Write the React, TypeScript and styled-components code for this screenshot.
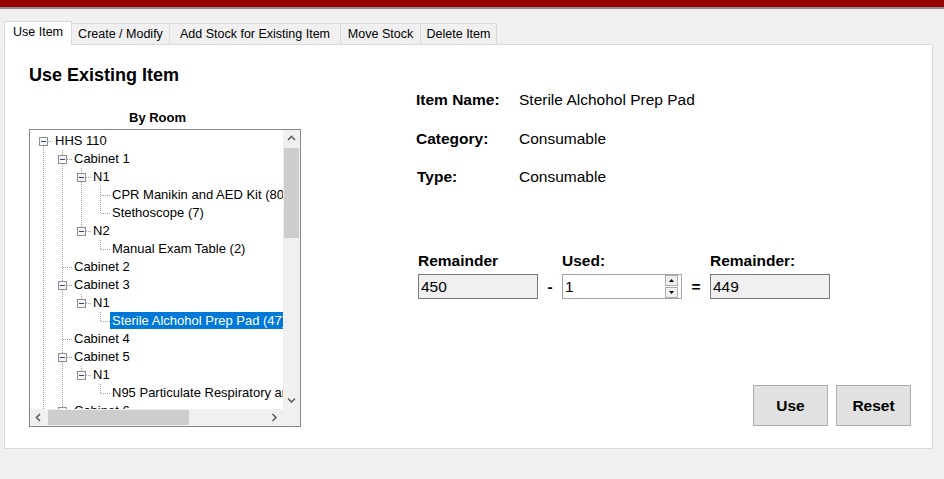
import React from "react"
import styled, { createGlobalStyle } from "styled-components"

const GlobalStyle = createGlobalStyle`
    body {
        margin: 0;
        background: #f0f0f0;
        font-family: "Liberation Sans", Arial, sans-serif;
        color: #000;
    }
`

type TreeNode = {
    label: string
    children?: TreeNode[]
    selected?: boolean
}

type FlatRow = {
    label: string
    level: number
    guides: boolean[]
    hasPrev: boolean
    hasNext: boolean
    expandable: boolean
    selected: boolean
}

const tree: TreeNode[] = [
    {
        label: "HHS 110",
        children: [
            {
                label: "Cabinet 1",
                children: [
                    { label: "N1", children: [{ label: "CPR Manikin and AED Kit (80)" }, { label: "Stethoscope (7)" }] },
                    { label: "N2", children: [{ label: "Manual Exam Table (2)" }] },
                ],
            },
            { label: "Cabinet 2" },
            {
                label: "Cabinet 3",
                children: [{ label: "N1", children: [{ label: "Sterile Alchohol Prep Pad (47)", selected: true }] }],
            },
            { label: "Cabinet 4" },
            {
                label: "Cabinet 5",
                children: [{ label: "N1", children: [{ label: "N95 Particulate Respiratory and Surgical Mask (20)" }] }],
            },
            { label: "Cabinet 6", children: [{ label: "N1" }] },
        ],
    },
    { label: "HHS 111", children: [{ label: "Cabinet 1" }] },
]

const flatten = (nodes: TreeNode[], level: number, guides: boolean[]): FlatRow[] =>
    nodes.flatMap((node, i) => {
        const hasNext = i < nodes.length - 1
        const row: FlatRow = {
            label: node.label,
            level,
            guides,
            hasPrev: i > 0 || level > 0,
            hasNext,
            expandable: !!node.children,
            selected: !!node.selected,
        }
        return [row, ...(node.children ? flatten(node.children, level + 1, [...guides, hasNext]) : [])]
    })

const rows = flatten(tree, 0, [])

// tab widths as the form lays them out
const tabs = [
    { label: "Use Item", width: 68 },
    { label: "Create / Modify", width: 99 },
    { label: "Add Stock for Existing Item", width: 172 },
    { label: "Move Stock", width: 81 },
    { label: "Delete Item", width: 77 },
]

const TopBar = styled.div`
    height: 7px;
    background: #990000;
    border-bottom: 2px solid #8c8c8c;
`

const TabStrip = styled.div`
    display: flex;
    align-items: flex-end;
    height: 23px;
    margin-top: 12px;
    padding-left: 4px;
`

const Tab = styled.div<{ $active?: boolean; $width: number }>`
    position: relative;
    z-index: 1;
    box-sizing: border-box;
    width: ${(p) => p.$width}px;
    height: ${(p) => (p.$active ? "24px" : "21px")};
    margin-bottom: ${(p) => (p.$active ? "-1px" : "0")};
    margin-left: -1px;
    background: ${(p) => (p.$active ? "#fff" : "#f0f0f0")};
    border: 1px solid #d9d9d9;
    border-bottom: none;
    font-size: 12.5px;
    line-height: 20px;
    text-align: center;
    white-space: nowrap;

    &:first-child {
        margin-left: 0;
    }
`

const Panel = styled.div`
    box-sizing: border-box;
    display: flex;
    width: 929px;
    height: 405px;
    margin-left: 4px;
    padding: 19px 21px 22px 24px;
    background: #fff;
    border: 1px solid #dadada;
`

const LeftColumn = styled.div`
    display: flex;
    flex-direction: column;
    width: 272px;
    flex: none;
`

const Title = styled.div`
    font-size: 18px;
    font-weight: bold;
    line-height: 22px;
`

const RoomLabel = styled.div`
    margin: 24px 0 0 100px;
    font-size: 13px;
    font-weight: bold;
    line-height: 15px;
`

const TreeBox = styled.div`
    box-sizing: border-box;
    display: grid;
    grid-template-columns: 1fr 17px;
    grid-template-rows: 1fr 17px;
    width: 272px;
    height: 298px;
    margin-top: 4px;
    border: 1px solid #828790;
    background: #fff;
`

const TreeList = styled.div`
    overflow: hidden;
    padding: 2px 0 0 4px;
`

const TreeRow = styled.div`
    display: flex;
    height: 18px;
    white-space: nowrap;
`

const NodeLabel = styled.span<{ $selected?: boolean }>`
    height: 17px;
    padding: 0 2px;
    font-size: 13px;
    line-height: 17px;
    background: ${(p) => (p.$selected ? "#0078d7" : "transparent")};
    color: ${(p) => (p.$selected ? "#fff" : "#000")};
`

const CellSvg = styled.svg`
    display: block;
    flex: none;
`

const VScroll = styled.div`
    display: flex;
    flex-direction: column;
    background: #f0f0f0;
`

const HScroll = styled.div`
    display: flex;
    align-items: center;
    background: #f0f0f0;
`

const Corner = styled.div`
    background: #f0f0f0;
`

const ArrowButton = styled.div`
    display: flex;
    align-items: center;
    justify-content: center;
    width: 17px;
    height: 17px;
    flex: none;
`

const Track = styled.div<{ $vertical?: boolean }>`
    flex: 1;
    display: flex;
    flex-direction: ${(p) => (p.$vertical ? "column" : "row")};
    align-items: center;
`

const Thumb = styled.div<{ $vertical?: boolean; $size: number }>`
    background: #cdcdcd;
    ${(p) =>
        p.$vertical
            ? `width: 15px; height: ${p.$size}px; margin-top: 1px;`
            : `height: 15px; width: ${p.$size}px; margin-left: 1px;`}
`

const RightColumn = styled.div`
    flex: 1;
    display: flex;
    flex-direction: column;
    margin-left: 115px;
`

const InfoGrid = styled.div`
    display: grid;
    grid-template-columns: 103px auto;
    grid-auto-rows: 18px;
    row-gap: 20.5px;
    margin-top: 27px;
    font-size: 15.5px;
    line-height: 18px;
`

const InfoLabel = styled.div<{ $inset?: boolean }>`
    font-weight: bold;
    padding-left: ${(p) => (p.$inset ? "1px" : "0")};
`

const CalcRow = styled.div`
    display: flex;
    align-items: flex-end;
    margin: 66px 0 0 2px;
`

const Field = styled.div`
    display: flex;
    flex-direction: column;
    gap: 4px;
`

const FieldLabel = styled.div`
    font-size: 15.5px;
    font-weight: bold;
    line-height: 18px;
`

const ValueBox = styled.div<{ $editable?: boolean }>`
    box-sizing: border-box;
    display: flex;
    align-items: center;
    width: 120px;
    height: 25px;
    padding: 1px 2px 1px 2px;
    background: ${(p) => (p.$editable ? "#fff" : "#f0f0f0")};
    border: 1px solid ${(p) => (p.$editable ? "#a5a5a5" : "#7a7a7a")};
    font-size: 15.5px;
`

const ValueText = styled.span`
    flex: 1;
`

const Spinner = styled.div`
    display: flex;
    flex-direction: column;
    gap: 1px;
    margin-right: 1px;
`

const SpinButton = styled.div`
    display: flex;
    align-items: center;
    justify-content: center;
    box-sizing: border-box;
    width: 13px;
    height: 11px;
    background: #f0f0f0;
    border: 1px solid #adadad;
`

const Operator = styled.div`
    width: 24px;
    height: 25px;
    line-height: 25px;
    text-align: center;
    font-size: 15.5px;
    font-weight: bold;
`

const WideOperator = styled(Operator)`
    width: 28px;
`

const ButtonRow = styled.div`
    display: flex;
    justify-content: flex-end;
    gap: 8px;
    margin-top: auto;
`

const Button = styled.button`
    box-sizing: border-box;
    width: 75px;
    height: 41px;
    padding: 0;
    background: #e1e1e1;
    border: 1px solid #adadad;
    font-family: "Liberation Sans", Arial, sans-serif;
    font-size: 15.5px;
    font-weight: bold;
    color: #000;
`

const DOT = { stroke: "#a0a0a0", strokeDasharray: "1 1", strokeWidth: 1 }

const GuideCell: React.FC<{ line: boolean }> = ({ line }) => (
    <CellSvg width={19} height={18}>
        {line && <line x1={9.5} y1={0} x2={9.5} y2={18} {...DOT} />}
    </CellSvg>
)

const ConnectorCell: React.FC<{ top: boolean; bottom: boolean; box: boolean }> = ({ top, bottom, box }) => (
    <CellSvg width={19} height={18}>
        {top && <line x1={9.5} y1={0} x2={9.5} y2={9} {...DOT} />}
        {bottom && <line x1={9.5} y1={10} x2={9.5} y2={18} {...DOT} />}
        <line x1={10} y1={9.5} x2={19} y2={9.5} {...DOT} />
        {box && (
            <>
                <rect x={5.5} y={5.5} width={8} height={8} fill="#f6f6f6" stroke="#8e8f8f" />
                <line x1={7} y1={9.5} x2={12} y2={9.5} stroke="#2b4b7e" />
            </>
        )}
    </CellSvg>
)

const Chevron: React.FC<{ dir: "up" | "down" | "left" | "right" }> = ({ dir }) => {
    const pts = {
        up: "1,5 4.5,1.5 8,5",
        down: "1,1.5 4.5,5 8,1.5",
        left: "5,1 1.5,4.5 5,8",
        right: "1.5,1 5,4.5 1.5,8",
    }[dir]
    const vertical = dir === "up" || dir === "down"
    return (
        <svg width={vertical ? 9 : 7} height={vertical ? 7 : 9}>
            <polyline points={pts} fill="none" stroke="#606060" strokeWidth={1.6} />
        </svg>
    )
}

const SpinArrow: React.FC<{ up?: boolean }> = ({ up }) => (
    <svg width={5} height={3}>
        <polygon points={up ? "0,3 2.5,0 5,3" : "0,0 2.5,3 5,0"} fill="#000" />
    </svg>
)

const RoomTree: React.FC = () => (
    <TreeBox>
        <TreeList>
            {rows.map((row, i) => (
                <TreeRow key={i}>
                    {row.guides.map((g, j) => (
                        <GuideCell key={j} line={g} />
                    ))}
                    <ConnectorCell top={row.hasPrev} bottom={row.hasNext} box={row.expandable} />
                    <NodeLabel $selected={row.selected}>{row.label}</NodeLabel>
                </TreeRow>
            ))}
        </TreeList>
        <VScroll>
            <ArrowButton>
                <Chevron dir="up" />
            </ArrowButton>
            <Track $vertical>
                <Thumb $vertical $size={90} />
            </Track>
            <ArrowButton>
                <Chevron dir="down" />
            </ArrowButton>
        </VScroll>
        <HScroll>
            <ArrowButton>
                <Chevron dir="left" />
            </ArrowButton>
            <Track>
                <Thumb $size={141} />
            </Track>
            <ArrowButton>
                <Chevron dir="right" />
            </ArrowButton>
        </HScroll>
        <Corner />
    </TreeBox>
)

export default function App() {
    return (
        <>
            <GlobalStyle />
            <TopBar />
            <TabStrip>
                {tabs.map((t, i) => (
                    <Tab key={t.label} $active={i === 0} $width={t.width}>
                        {t.label}
                    </Tab>
                ))}
            </TabStrip>
            <Panel>
                <LeftColumn>
                    <Title>Use Existing Item</Title>
                    <RoomLabel>By Room</RoomLabel>
                    <RoomTree />
                </LeftColumn>
                <RightColumn>
                    <InfoGrid>
                        <InfoLabel>Item Name:</InfoLabel>
                        <div>Sterile Alchohol Prep Pad</div>
                        <InfoLabel>Category:</InfoLabel>
                        <div>Consumable</div>
                        <InfoLabel $inset>Type:</InfoLabel>
                        <div>Consumable</div>
                    </InfoGrid>
                    <CalcRow>
                        <Field>
                            <FieldLabel>Remainder</FieldLabel>
                            <ValueBox>
                                <ValueText>450</ValueText>
                            </ValueBox>
                        </Field>
                        <Operator>-</Operator>
                        <Field>
                            <FieldLabel>Used:</FieldLabel>
                            <ValueBox $editable>
                                <ValueText>1</ValueText>
                                <Spinner>
                                    <SpinButton>
                                        <SpinArrow up />
                                    </SpinButton>
                                    <SpinButton>
                                        <SpinArrow />
                                    </SpinButton>
                                </Spinner>
                            </ValueBox>
                        </Field>
                        <WideOperator>=</WideOperator>
                        <Field>
                            <FieldLabel>Remainder:</FieldLabel>
                            <ValueBox>
                                <ValueText>449</ValueText>
                            </ValueBox>
                        </Field>
                    </CalcRow>
                    <ButtonRow>
                        <Button>Use</Button>
                        <Button>Reset</Button>
                    </ButtonRow>
                </RightColumn>
            </Panel>
        </>
    )
}
